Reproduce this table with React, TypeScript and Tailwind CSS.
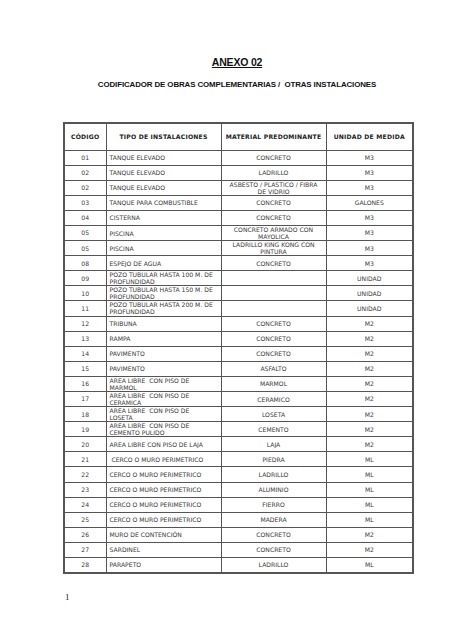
const rows: [string, string, string, string][] = [
  ["01", "TANQUE ELEVADO", "CONCRETO", "M3"],
  ["02", "TANQUE ELEVADO", "LADRILLO", "M3"],
  ["02", "TANQUE ELEVADO", "ASBESTO / PLASTICO / FIBRA\nDE VIDRIO", "M3"],
  ["03", "TANQUE PARA COMBUSTIBLE", "CONCRETO", "GALONES"],
  ["04", "CISTERNA", "CONCRETO", "M3"],
  ["05", "PISCINA", "CONCRETO ARMADO CON\nMAYOLICA", "M3"],
  ["05", "PISCINA", "LADRILLO KING KONG CON\nPINTURA", "M3"],
  ["08", "ESPEJO DE AGUA", "CONCRETO", "M3"],
  ["09", "POZO TUBULAR HASTA 100 M. DE\nPROFUNDIDAD", "", "UNIDAD"],
  ["10", "POZO TUBULAR HASTA 150 M. DE\nPROFUNDIDAD", "", "UNIDAD"],
  ["11", "POZO TUBULAR HASTA 200 M. DE\nPROFUNDIDAD", "", "UNIDAD"],
  ["12", "TRIBUNA", "CONCRETO", "M2"],
  ["13", "RAMPA", "CONCRETO", "M2"],
  ["14", "PAVIMENTO", "CONCRETO", "M2"],
  ["15", "PAVIMENTO", "ASFALTO", "M2"],
  ["16", "AREA LIBRE  CON PISO DE\nMARMOL", "MARMOL", "M2"],
  ["17", "AREA LIBRE  CON PISO DE\nCERAMICA", "CERAMICO", "M2"],
  ["18", "AREA LIBRE  CON PISO DE\nLOSETA", "LOSETA", "M2"],
  ["19", "AREA LIBRE  CON PISO DE\nCEMENTO PULIDO", "CEMENTO", "M2"],
  ["20", "AREA LIBRE CON PISO DE LAJA", "LAJA", "M2"],
  ["21", " CERCO O MURO PERIMETRICO", "PIEDRA", "ML"],
  ["22", "CERCO O MURO PERIMETRICO", "LADRILLO", "ML"],
  ["23", "CERCO O MURO PERIMETRICO", "ALUMINIO", "ML"],
  ["24", "CERCO O MURO PERIMETRICO", "FIERRO", "ML"],
  ["25", "CERCO O MURO PERIMETRICO", "MADERA", "ML"],
  ["26", "MURO DE CONTENCIÓN", "CONCRETO", "M2"],
  ["27", "SARDINEL", "CONCRETO", "M2"],
  ["28", "PARAPETO", "LADRILLO", "ML"],
];

function Lines({ text }: { text: string }) {
  const parts = text.split("\n");
  return (
    <>
      {parts.map((p, i) => (
        <div key={i} className="whitespace-pre leading-[7px]">
          {p}
        </div>
      ))}
    </>
  );
}

export default function App() {
  return (
    <div className="w-[474px] h-[632px] bg-white text-[#3a3a3a] relative">
      <div className="pt-[57px] flex flex-col items-center">
        <h1 className="font-['Liberation_Sans',Arial,sans-serif] font-bold text-[10.5px] leading-[11px] underline underline-offset-[1px] text-[#111] tracking-[-0.2px]">
          ANEXO 02
        </h1>
        <h2 className="mt-[12px] font-['Liberation_Sans',Arial,sans-serif] font-bold text-[7.9px] leading-[9px] text-[#111] whitespace-pre tracking-[-0.1px]">
          CODIFICADOR DE OBRAS COMPLEMENTARIAS /  OTRAS INSTALACIONES
        </h2>
      </div>

      <div className="pl-[63px] pt-[33px]">
        <table className="border-collapse border-2 border-[#555] table-fixed w-[349px] font-['DejaVu_Sans',Verdana,sans-serif] text-[6.1px]">
          <colgroup>
            <col className="w-[42px]" />
            <col className="w-[115px]" />
            <col className="w-[105px]" />
            <col className="w-[87px]" />
          </colgroup>
          <thead>
            <tr className="h-[27px] font-bold text-[#222] tracking-[0.2px]">
              <th className="border border-[#555] text-center font-bold">CÓDIGO</th>
              <th className="border border-[#555] text-center font-bold">TIPO DE INSTALACIONES</th>
              <th className="border border-[#555] text-center font-bold">MATERIAL PREDOMINANTE</th>
              <th className="border border-[#555] text-center font-bold">UNIDAD DE MEDIDA</th>
            </tr>
          </thead>
          <tbody>
            {rows.map((r, i) => (
              <tr key={i} className="h-[15.1px]">
                <td className="border border-[#555] text-center p-0">{r[0]}</td>
                <td className="border border-[#555] text-left pl-[3px] p-0">
                  <Lines text={r[1]} />
                </td>
                <td className="border border-[#555] text-center p-0">
                  <Lines text={r[2]} />
                </td>
                <td className="border border-[#555] text-center p-0">{r[3]}</td>
              </tr>
            ))}
          </tbody>
        </table>
      </div>

      <div className="pl-[65px] pt-[18px] font-['Liberation_Serif',serif] text-[9px] leading-[10px] text-[#222]">
        1
      </div>
    </div>
  );
}
